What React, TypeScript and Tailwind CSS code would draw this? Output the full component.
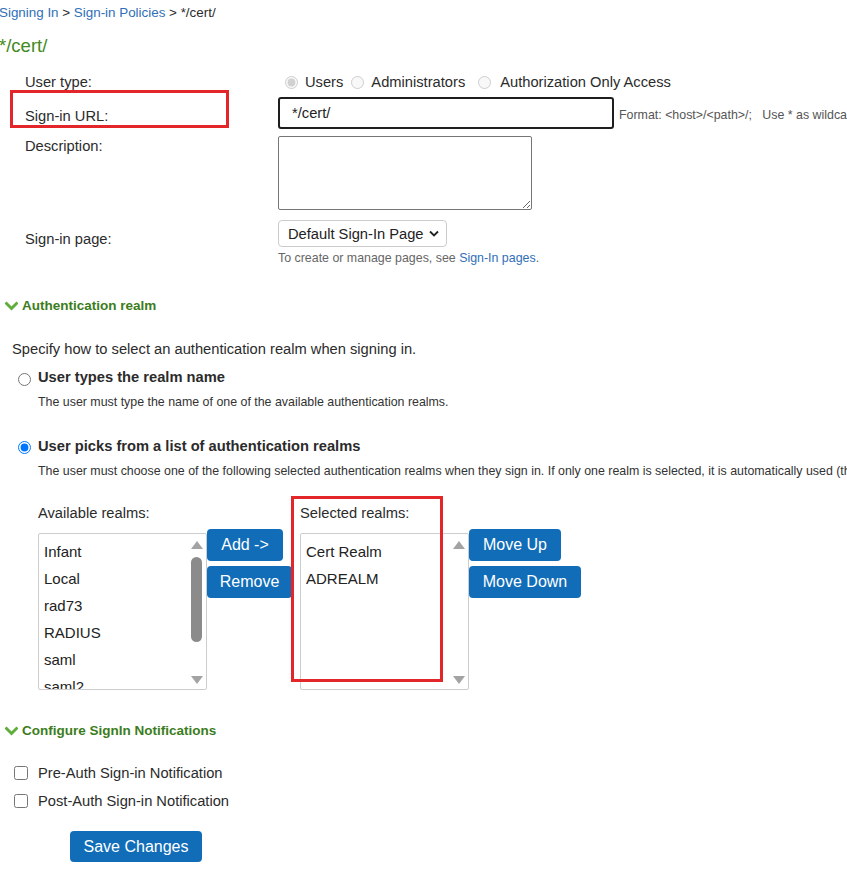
import React from 'react';

const AVAILABLE = ['Infant', 'Local', 'rad73', 'RADIUS', 'saml', 'saml2'];
const SELECTED = ['Cert Realm', 'ADREALM'];

function Chevron() {
  return (
    <svg width="13" height="10" viewBox="0 0 13 10" className="shrink-0">
      <path d="M1.5 2.5 L6.5 7.5 L11.5 2.5" fill="none" stroke="#5fae3c" strokeWidth="3" strokeLinecap="square" />
    </svg>
  );
}

function SectionHeader({ title }: { title: string }) {
  return (
    <div className="flex items-center gap-[4px] pl-[5px] h-[16px]">
      <Chevron />
      <span className="text-[13.5px] leading-[16px] font-bold text-[#3b7d1c]">{title}</span>
    </div>
  );
}

function ScrollArrow({ up }: { up?: boolean }) {
  return (
    <svg width="12" height="8" viewBox="0 0 12 8">
      <path d={up ? 'M0 8 L6 0 L12 8 Z' : 'M0 0 L6 8 L12 0 Z'} fill="#a3a3a3" />
    </svg>
  );
}

// listbox with a fake native scrollbar on the right
function RealmList({ items, thumb }: { items: string[]; thumb?: boolean }) {
  return (
    <div className="mt-[4px] flex h-[157px] w-[169px] shrink-0 overflow-hidden rounded-[2px] border border-[#cdcdcd] bg-white">
      <ul className="flex-1 pl-[5px] pt-[4px] text-[15px] leading-[27px] text-[#222]">
        {items.map((it) => (
          <li key={it} className="whitespace-nowrap">{it}</li>
        ))}
      </ul>
      <div className="flex w-[17px] flex-col items-center justify-between pb-[5px] pt-[7px] mr-[1px]">
        <ScrollArrow up />
        <div className="flex w-full flex-1 justify-center py-[8px]">
          {thumb && <div className="h-[85px] w-[11px] rounded-full bg-[#8b8b8b]" />}
        </div>
        <ScrollArrow />
      </div>
    </div>
  );
}

function BlueButton({ label, w }: { label: string; w: string }) {
  return (
    <button className={`${w} h-[32px] rounded-[4px] bg-[#116db7] text-[16px] leading-[20px] text-white`}>
      {label}
    </button>
  );
}

export default function App() {
  return (
    <div
      className="relative h-[872px] w-[847px] overflow-hidden bg-white text-[#2b2b2b]"
      style={{ fontFamily: '"Liberation Sans", Arial, sans-serif' }}
    >
      {/* breadcrumb */}
      <div className="ml-[-1px] pt-[4px] text-[13.4px] leading-[18px] whitespace-nowrap">
        <span className="text-[#2f6fb8]">Signing In</span>
        <span> &gt; </span>
        <span className="text-[#2f6fb8]">Sign-in Policies</span>
        <span> &gt; */cert/</span>
      </div>
      <h1 className="ml-[-1px] mt-[13px] text-[18.5px] leading-[22px] font-normal text-[#3f8a22]">*/cert/</h1>

      {/* policy fields */}
      <div className="mt-[15px] pl-[25px] text-[14.7px]">
        <div className="flex h-[20px] items-center">
          <div className="w-[253px] shrink-0 leading-[20px]">User type:</div>
          <div className="flex items-center whitespace-nowrap leading-[20px]">
            <input type="radio" name="utype" defaultChecked disabled className="ml-[7px] size-[13px]" />
            <span className="ml-[7px]">Users</span>
            <input type="radio" name="utype" disabled className="ml-[8px] size-[13px]" />
            <span className="ml-[7px]">Administrators</span>
            <input type="radio" name="utype" disabled className="ml-[13px] size-[13px]" />
            <span className="ml-[9px]">Authorization Only Access</span>
          </div>
        </div>

        <div className="mt-[5px] flex">
          <div className="w-[253px] shrink-0 pt-[9px] leading-[20px]">Sign-in URL:</div>
          <input
            defaultValue="*/cert/"
            className="h-[32px] w-[336px] shrink-0 rounded-[3px] border-2 border-[#1e1e1e] px-[12px] text-[14.7px] text-[#222] outline-none"
          />
          <div className="ml-[5px] shrink-0 whitespace-nowrap pt-[11px] text-[12.4px] leading-[14px] text-[#555]">
            Format: &lt;host&gt;/&lt;path&gt;/;&nbsp;&nbsp; Use * as wildcard
          </div>
        </div>

        <div className="mt-[7px] flex">
          <div className="w-[253px] shrink-0 leading-[20px]">Description:</div>
          <textarea className="h-[74px] w-[254px] shrink-0 rounded-[2px] border border-[#767676] outline-none" />
        </div>

        <div className="mt-[10px] flex">
          <div className="w-[253px] shrink-0 pt-[9px] leading-[20px]">Sign-in page:</div>
          <div>
            <div className="flex h-[27px] w-[169px] items-center justify-between rounded-[4px] border border-[#cccccc] pl-[9px] pr-[7px]">
              <span className="text-[14.7px] leading-[20px] text-[#222]">Default Sign-In Page</span>
              <svg width="10" height="7" viewBox="0 0 10 7">
                <path d="M1 1.5 L5 5.5 L9 1.5" fill="none" stroke="#222" strokeWidth="1.8" />
              </svg>
            </div>
            <div className="mt-[4px] whitespace-nowrap text-[12.4px] leading-[14px] text-[#666]">
              To create or manage pages, see <span className="text-[#2f6fb8]">Sign-In pages</span>.
            </div>
          </div>
        </div>
      </div>

      {/* authentication realm */}
      <div className="mt-[33px]">
        <SectionHeader title="Authentication realm" />
      </div>
      <p className="ml-[12px] mt-[25px] text-[14.7px] leading-[20px]">
        Specify how to select an authentication realm when signing in.
      </p>

      <div className="ml-[18px] mt-[8px] flex items-center">
        <input type="radio" name="realm" className="mt-[5px] size-[13px]" />
        <span className="ml-[7px] text-[14.7px] leading-[20px] font-bold">User types the realm name</span>
      </div>
      <p className="ml-[38px] mt-[7px] text-[12.4px] leading-[16px] text-[#333]">
        The user must type the name of one of the available authentication realms.
      </p>

      <div className="ml-[18px] mt-[26px] flex items-center">
        <input type="radio" name="realm" defaultChecked className="mt-[3px] size-[13px]" />
        <span className="ml-[7px] text-[14.7px] leading-[20px] font-bold">User picks from a list of authentication realms</span>
      </div>
      <p className="ml-[38px] mt-[7px] whitespace-nowrap text-[12.4px] leading-[16px] text-[#333]">
        The user must choose one of the following selected authentication realms when they sign in. If only one realm is selected, it is automatically used (the user will not see a list).
      </p>

      <div className="ml-[38px] mt-[24px] flex text-[14.7px] leading-[20px]">
        <div className="w-[262px] shrink-0">Available realms:</div>
        <div>Selected realms:</div>
      </div>
      <div className="ml-[38px] mt-[6px] flex items-start">
        <RealmList items={AVAILABLE} thumb />
        <div className="flex w-[93px] shrink-0 flex-col items-start gap-[5px]">
          <BlueButton label="Add ->" w="w-[76px]" />
          <BlueButton label="Remove" w="w-[85px]" />
        </div>
        <RealmList items={SELECTED} />
        <div className="flex flex-col items-start gap-[5px]">
          <BlueButton label="Move Up" w="w-[92px]" />
          <BlueButton label="Move Down" w="w-[112px]" />
        </div>
      </div>

      {/* notifications */}
      <div className="mt-[33px]">
        <SectionHeader title="Configure SignIn Notifications" />
      </div>
      <label className="ml-[14px] mt-[24px] flex items-center text-[14.7px] leading-[20px]">
        <input type="checkbox" className="size-[14px]" />
        <span className="ml-[10px]">Pre-Auth Sign-in Notification</span>
      </label>
      <label className="ml-[14px] mt-[8px] flex items-center text-[14.7px] leading-[20px]">
        <input type="checkbox" className="size-[14px]" />
        <span className="ml-[10px]">Post-Auth Sign-in Notification</span>
      </label>

      <button className="ml-[70px] mt-[20px] h-[31px] w-[132px] rounded-[4px] bg-[#116db7] text-[16px] leading-[20px] text-white">
        Save Changes
      </button>

      {/* highlight boxes */}
      <div className="pointer-events-none absolute left-[10px] top-[90px] h-[38px] w-[219px] border-[3px] border-[#e3262a]" />
      <div className="pointer-events-none absolute left-[291px] top-[496px] h-[186px] w-[152px] border-[3px] border-[#e3262a]" />
    </div>
  );
}
